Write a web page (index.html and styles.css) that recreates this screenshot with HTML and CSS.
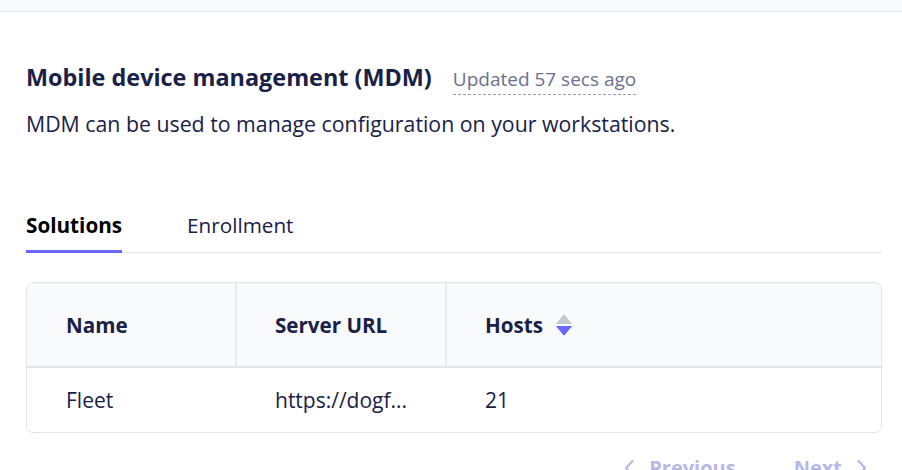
FILE: index.html
```html
<!DOCTYPE html>
<html lang="en">
<head>
<meta charset="utf-8">
<title>MDM</title>
<link rel="stylesheet" href="styles.css">
</head>
<body>
<div class="topbar"></div>
<main class="page">
  <section class="intro">
    <div class="title-row">
      <h1 class="title">Mobile device management (MDM)</h1>
      <span class="updated">Updated 57 secs ago</span>
    </div>
    <p class="desc">MDM can be used to manage configuration on your workstations.</p>
  </section>

  <nav class="tabs">
    <span class="tab tab-active">Solutions</span>
    <span class="tab">Enrollment</span>
  </nav>

  <div class="table-wrap">
    <table class="data-table">
      <colgroup>
        <col class="col-name">
        <col class="col-url">
        <col>
      </colgroup>
      <thead>
        <tr>
          <th>Name</th>
          <th>Server URL</th>
          <th>
            <span class="th-sort">Hosts
              <svg class="sort-icon" width="16" height="22" viewBox="0 0 16 22" aria-hidden="true">
                <path d="M8 0.8 L15.3 9.5 H0.7 Z" fill="#c5c7d1" stroke="#c5c7d1" stroke-linejoin="round" stroke-width="1"/>
                <path d="M0.7 12.5 H15.3 L8 21.2 Z" fill="#6a67fe" stroke="#6a67fe" stroke-linejoin="round" stroke-width="1"/>
              </svg>
            </span>
          </th>
        </tr>
      </thead>
      <tbody>
        <tr>
          <td>Fleet</td>
          <td>https://dogf...</td>
          <td>21</td>
        </tr>
      </tbody>
    </table>
  </div>

  <div class="pagination">
    <span class="page-btn">
      <svg width="12" height="18" viewBox="0 0 12 18" aria-hidden="true"><path d="M9.5 2 L3 9 L9.5 16" fill="none" stroke="currentColor" stroke-width="2.2" stroke-linecap="round" stroke-linejoin="round"/></svg>
      Previous
    </span>
    <span class="page-btn">
      Next
      <svg width="12" height="18" viewBox="0 0 12 18" aria-hidden="true"><path d="M2.5 2 L9 9 L2.5 16" fill="none" stroke="currentColor" stroke-width="2.2" stroke-linecap="round" stroke-linejoin="round"/></svg>
    </span>
  </div>
</main>
</body>
</html>
```

FILE: styles.css
```css
* { box-sizing: border-box; }

html, body {
  margin: 0;
  padding: 0;
  background: #ffffff;
  overflow: hidden;
}

body {
  font-family: "Open Sans", "Noto Sans", sans-serif;
  color: #192147;
  width: 902px;
  height: 470px;
}

.topbar {
  height: 12px;
  background: #f9fafc;
  border-bottom: 1px solid #e2e4ea;
}

.page {
  padding: 0 20px 0 26px;
}

.intro {
  padding-top: 50px;
}

.title-row {
  display: flex;
  align-items: baseline;
  gap: 21px;
}

.title {
  margin: 0;
  font-size: 23.4px;
  font-weight: 700;
  line-height: 30px;
  color: #192147;
}

.updated {
  font-size: 19px;
  color: #6b7090;
  line-height: 22px;
  padding-bottom: 4px;
  border-bottom: 1px dashed #9a9db0;
}

.desc {
  margin: 15px 0 0;
  font-size: 21.3px;
  line-height: 28px;
  color: #192147;
}

.tabs {
  display: flex;
  gap: 65px;
  margin-top: 73px;
  border-bottom: 1px solid #e2e4ea;
}

.tab {
  font-size: 20.7px;
  line-height: 28px;
  padding-bottom: 11px;
  color: #192147;
  border-bottom: 3px solid transparent;
  margin-bottom: -1px;
}

.tab-active {
  font-weight: 700;
  color: #000000;
  border-bottom-color: #6a67fe;
}

.table-wrap {
  margin-top: 29px;
  border: 1px solid #e2e4ea;
  border-radius: 7px;
  overflow: hidden;
}

.data-table {
  width: 100%;
  table-layout: fixed;
  border-collapse: separate;
  border-spacing: 0;
  font-size: 21px;
}

.col-name { width: 208px; }
.col-url { width: 210px; }

.data-table th {
  height: 85px;
  background: #f9fafc;
  text-align: left;
  font-size: 20.6px;
  font-weight: 700;
  padding: 0 0 0 39px;
  border-bottom: 2px solid #e2e4ea;
  color: #192147;
}

.data-table th + th {
  border-left: 2px solid #e9eaef;
  padding-left: 38px;
}

.th-sort {
  display: inline-flex;
  align-items: center;
  gap: 13px;
}

.sort-icon { display: block; }

.data-table td {
  height: 64px;
  padding: 0 0 0 39px;
  color: #192147;
  white-space: nowrap;
}

.data-table td + td { padding-left: 40px; }

.pagination {
  display: flex;
  justify-content: flex-end;
  gap: 58px;
  margin-top: 21px;
  padding-right: 14px;
  line-height: 28px;
}

.page-btn {
  display: inline-flex;
  align-items: center;
  gap: 14px;
  font-size: 20px;
  font-weight: 700;
  color: #b8b7e6;
}
```
